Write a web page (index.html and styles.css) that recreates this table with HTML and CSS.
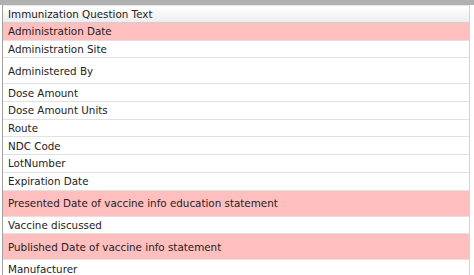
FILE: index.html
```html
<!DOCTYPE html>
<html>
<head>
<meta charset="utf-8">
<link rel="stylesheet" href="styles.css">
</head>
<body>
<div class="frame">
  <div class="grid">
    <div class="head">Immunization Question Text</div>
    <div class="row req">Administration Date</div>
    <div class="row">Administration Site</div>
    <div class="row tall">Administered By</div>
    <div class="row">Dose Amount</div>
    <div class="row">Dose Amount Units</div>
    <div class="row">Route</div>
    <div class="row">NDC Code</div>
    <div class="row">LotNumber</div>
    <div class="row">Expiration Date</div>
    <div class="row req tall">Presented Date of vaccine info education statement</div>
    <div class="row">Vaccine discussed</div>
    <div class="row req tall">Published Date of vaccine info statement</div>
    <div class="row">Manufacturer</div>
  </div>
</div>
</body>
</html>
```
FILE: styles.css
```css
html, body {
  margin: 0;
  padding: 0;
  background: #ffffff;
  overflow: hidden;
}

.frame {
  width: 474px;
  height: 275px;
  border-top: 5px solid #b0b0b0;
  box-sizing: border-box;
  padding-left: 2px;
}

.grid {
  display: flex;
  flex-direction: column;
  width: 466px;
  border-left: 1px solid #a0a0a0;
  border-right: 1px solid #d4d4d4;
  font-family: Tahoma, "DejaVu Sans", sans-serif;
  font-size: 10.35px;
  color: #222222;
}

.head {
  flex: none;
  height: 16px;
  line-height: 16px;
  padding-left: 5px;
  background: linear-gradient(#ffffff, #eeeef1);
  border-top: 1px solid #e6e6e6;
  border-bottom: 1px solid #d0d0d0;
}

.row {
  flex: none;
  height: 16.7px;
  display: flex;
  align-items: center;
  padding-left: 5px;
  border-bottom: 1px solid #e2e2e2;
  background: #ffffff;
  white-space: nowrap;
}

.row.tall {
  height: 25px;
}

.row.req {
  background: #ffbfbf;
}
```
